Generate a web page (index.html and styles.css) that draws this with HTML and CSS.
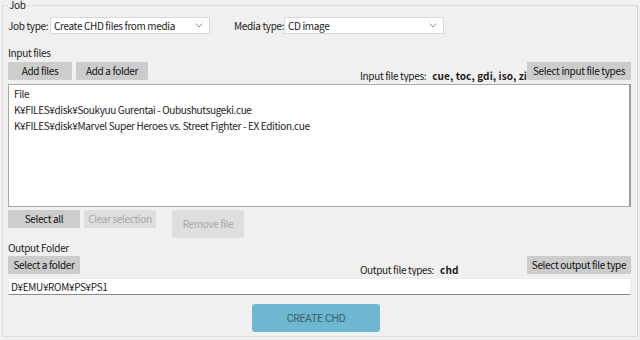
FILE: index.html
```html
<!DOCTYPE html>
<html lang="ja">
<head>
    <meta charset="UTF-8">
    <title>CHD Converter</title>
    <link rel="stylesheet" href="styles.css">
</head>
<body>

<fieldset class="job">
    <legend>Job</legend>

    <div class="row combos">
        <span class="label">Job type:</span>
        <div class="combo">
            <span>Create CHD files from media</span>
            <svg class="chevron" width="8" height="5" viewBox="0 0 8 5"><path d="M0.5 0.5 L4 4 L7.5 0.5" fill="none" stroke="#8a8a8a" stroke-width="1"/></svg>
        </div>
        <span class="label media-label">Media type:</span>
        <div class="combo">
            <span>CD image</span>
            <svg class="chevron" width="8" height="5" viewBox="0 0 8 5"><path d="M0.5 0.5 L4 4 L7.5 0.5" fill="none" stroke="#8a8a8a" stroke-width="1"/></svg>
        </div>
    </div>

    <div class="section-title input-title">Input files</div>

    <div class="row toolbar">
        <button class="btn btn-sm">Add files</button>
        <button class="btn btn-md">Add a folder</button>
        <div class="types">Input file types:<b>cue, toc, gdi, iso, zip</b></div>
        <button class="btn btn-wide">Select input file types</button>
    </div>

    <div class="file-list">
        <div class="list-head">File</div>
        <div class="list-row">K¥FILES¥disk¥Soukyuu Gurentai - Oubushutsugeki.cue</div>
        <div class="list-row">K¥FILES¥disk¥Marvel Super Heroes vs. Street Fighter - EX Edition.cue</div>
    </div>

    <div class="row list-actions">
        <button class="btn btn-md">Select all</button>
        <button class="btn btn-md" disabled>Clear selection</button>
        <button class="btn btn-md btn-tall" disabled>Remove file</button>
    </div>

    <div class="section-title output-title">Output Folder</div>

    <div class="row toolbar out-bar">
        <button class="btn btn-md">Select a folder</button>
        <div class="types">Output file types:<b>chd</b></div>
        <button class="btn btn-wide">Select output file type</button>
    </div>

    <div class="path-box">D¥EMU¥ROM¥PS¥PS1</div>

    <div class="row run">
        <button class="btn-create">CREATE CHD</button>
    </div>
</fieldset>

</body>
</html>
```

FILE: styles.css
```css
:root {
    --bg: #f0f0f0;
    --btn: #cccccc;
    --btn-disabled: #dedede;
    --text: #1a1a1a;
    --font: "Noto Sans CJK JP", "Noto Sans", sans-serif;
}

body {
    margin: 0;
    background: var(--bg);
    color: var(--text);
    font-family: var(--font);
    font-size: 10px;
    letter-spacing: -0.35px;
    line-height: 14px;
    white-space: nowrap;
}

.job {
    margin: 0 2px;
    padding: 0 6px 0 5px;
    height: 337px;
    border: 1px solid #dcdcdc;
    border-right-color: #d2d2d2;
    box-sizing: border-box;
    min-width: 0;
}

.job legend {
    padding: 0 1px;
    line-height: 10px;
}

.row {
    display: flex;
    align-items: center;
}

.combos {
    margin-top: 7px;
    height: 17px;
}

.label {
    width: 42px;
}

.media-label {
    margin-left: 24px;
    width: 50px;
}

.combo {
    display: flex;
    align-items: center;
    justify-content: space-between;
    width: 160px;
    height: 17px;
    box-sizing: border-box;
    padding: 0 4px 0 3px;
    background: #fff;
    border: 1px solid #d9d9d9;
}

.chevron {
    margin-right: 2px;
}

.section-title {
    height: 14px;
}

.input-title {
    margin-top: 12px;
}

.toolbar {
    margin-top: 2px;
    height: 18px;
    align-items: stretch;
}

.btn {
    height: 18px;
    padding: 0;
    border: none;
    border-radius: 1px;
    background: var(--btn);
    color: #111;
    font-family: var(--font);
    font-size: 10px;
    letter-spacing: -0.35px;
    line-height: 18px;
    margin-right: 4px;
    white-space: nowrap;
}

.btn:disabled {
    background: var(--btn-disabled);
    color: #a6a6a6;
}

.btn-sm { width: 64px; }
.btn-md { width: 72px; }
.btn-wide { width: 104px; margin-right: 0; }
.btn-tall { height: 28px; margin-left: 12px; }

.types {
    width: 167px;
    margin-left: auto;
    align-self: flex-end;
    overflow: hidden;
    line-height: 13px;
    position: relative;
    top: 2px;
}

.types b {
    margin-left: 6px;
    letter-spacing: 0.1px;
}

.file-list {
    margin-top: 4px;
    height: 123px;
    box-sizing: border-box;
    background: #fff;
    border: 1px solid #a8a8a8;
    border-right: 2px solid #9c9c9c;
    padding: 1px 5px;
}

.list-head,
.list-row {
    line-height: 16px;
}

.list-actions {
    margin-top: 3px;
    align-items: flex-start;
    height: 28px;
}

.output-title {
    margin-top: 3px;
}

.out-bar {
    margin-top: 1px;
}

.path-box {
    margin-top: 4px;
    height: 17px;
    box-sizing: border-box;
    background: #fff;
    border: 1px solid #ececec;
    border-bottom-color: #8a8a8a;
    padding-left: 2px;
    line-height: 15px;
}

.run {
    margin-top: 9px;
    padding-left: 244px;
}

.btn-create {
    width: 128px;
    height: 28px;
    border: none;
    border-radius: 3px;
    background: #6db8d0;
    color: #3d5d6b;
    font-family: Roboto, sans-serif;
    font-size: 10.5px;
    letter-spacing: -0.3px;
}
```
